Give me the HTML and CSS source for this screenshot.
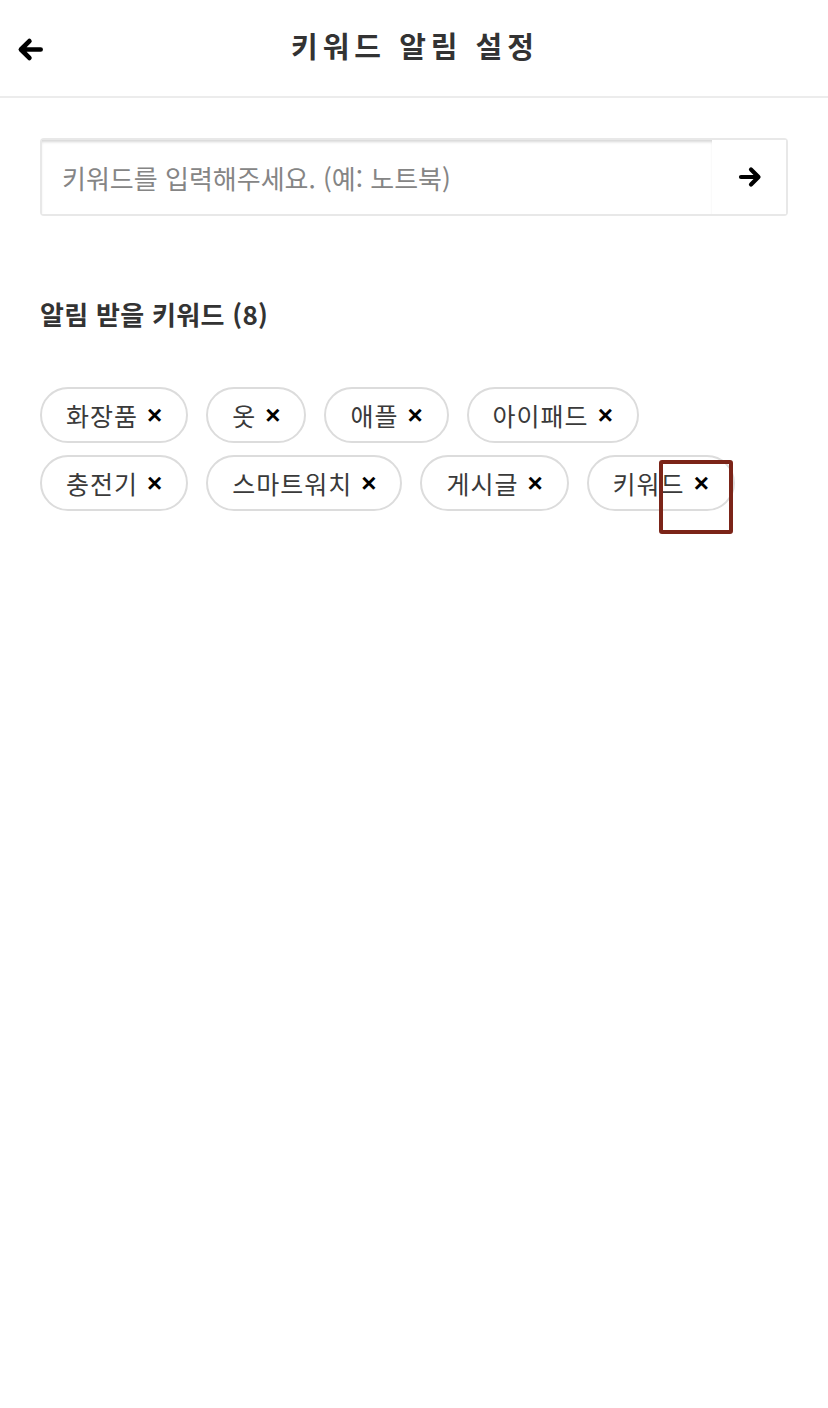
FILE: index.html
```html
<!DOCTYPE html>
<html lang="ko">
<head>
<meta charset="utf-8">
<title>키워드 알림 설정</title>
<link rel="stylesheet" href="styles.css">
</head>
<body>
<div class="app">
  <header class="topbar">
    <button class="back" aria-label="뒤로">
      <svg viewBox="0 0 24 24" width="24" height="24"><path d="M21 12H4M11 4.5L3.5 12L11 19.5" fill="none" stroke="#000" stroke-width="4.2" stroke-linecap="round" stroke-linejoin="round"/></svg>
    </button>
    <h1 class="title">키워드 알림 설정</h1>
  </header>
  <main class="content">
    <form class="search">
      <input class="search-input" type="text" placeholder="키워드를 입력해주세요. (예: 노트북)">
      <button class="submit" type="button" aria-label="추가">
        <svg viewBox="0 0 24 24" width="24" height="24"><path d="M3 12H20M13 4.5L20.5 12L13 19.5" fill="none" stroke="#000" stroke-width="4.2" stroke-linecap="round" stroke-linejoin="round"/></svg>
      </button>
    </form>
    <h2 class="label">알림 받을 키워드 (8)</h2>
    <ul class="chips">
      <li class="chip">화장품 <span class="x">×</span></li>
      <li class="chip">옷 <span class="x">×</span></li>
      <li class="chip">애플 <span class="x">×</span></li>
      <li class="chip">아이패드 <span class="x">×</span></li>
      <li class="chip">충전기 <span class="x">×</span></li>
      <li class="chip">스마트워치 <span class="x">×</span></li>
      <li class="chip">게시글 <span class="x">×</span></li>
      <li class="chip">키워드 <span class="x">×</span></li>
    </ul>
  </main>
  <div class="highlight"></div>
</div>
</body>
</html>
```

FILE: styles.css
```css
* { box-sizing: border-box; }
html, body { margin: 0; padding: 0; background: #fff; }
body {
  font-family: "Noto Sans CJK KR", "Noto Sans", "Liberation Sans", sans-serif;
  color: #333;
}
.app { position: relative; width: 828px; min-height: 1408px; }
.topbar {
  height: 98px;
  border-bottom: 2px solid #ececec;
  display: flex;
  align-items: center;
  justify-content: center;
  position: relative;
}
.back {
  position: absolute;
  left: 17px;
  top: 36px;
  padding: 0;
  border: 0;
  background: none;
  width: 27px;
  height: 27px;
  display: flex;
}
.back svg { width: 27px; height: 27px; }
.title {
  margin: 0 0 6px 0;
  padding-left: 2px;
  font-size: 29px;
  font-weight: 700;
  letter-spacing: 5px;
  color: #333;
}
.content { padding: 40px 40px 0 40px; }
.search {
  display: flex;
  height: 78px;
  border: 2px solid #e8e8e8;
  border-radius: 4px;
  margin: 0;
}
.search-input {
  flex: 1;
  border: 0;
  outline: none;
  font-family: inherit;
  font-size: 26px;
  padding: 0 20px;
  color: #333;
  box-shadow: inset 0 3px 3px -1px rgba(0,0,0,0.16);
  background: #fff;
}
.search-input::placeholder { color: #858585; }
.submit {
  width: 74px;
  border: 0;
  background: #fff;
  display: flex;
  align-items: center;
  justify-content: center;
  padding: 0 0 0 2px;
}
.label {
  margin: 81px 0 0 0;
  font-size: 26px;
  font-weight: 700;
  letter-spacing: 0.3px;
  color: #333;
  line-height: 34px;
}
.chips {
  list-style: none;
  margin: 56px 0 0 0;
  padding: 0;
  display: flex;
  flex-wrap: wrap;
  column-gap: 18px;
  row-gap: 12px;
}
.chip {
  height: 56px;
  border: 2px solid #dcdcdc;
  border-radius: 28px;
  padding: 0 24px;
  display: flex;
  align-items: center;
  font-size: 25px;
  letter-spacing: 1px;
  color: #3a3a3a;
  white-space: pre;
}
.x {
  font-family: "Liberation Sans", sans-serif;
  font-weight: 700;
  font-size: 26px;
  letter-spacing: 0;
  color: #000;
  margin-left: 1px;
}
.highlight {
  position: absolute;
  left: 659px;
  top: 460px;
  width: 74px;
  height: 74px;
  border: 4px solid #7b2418;
  border-radius: 3px;
}
```
